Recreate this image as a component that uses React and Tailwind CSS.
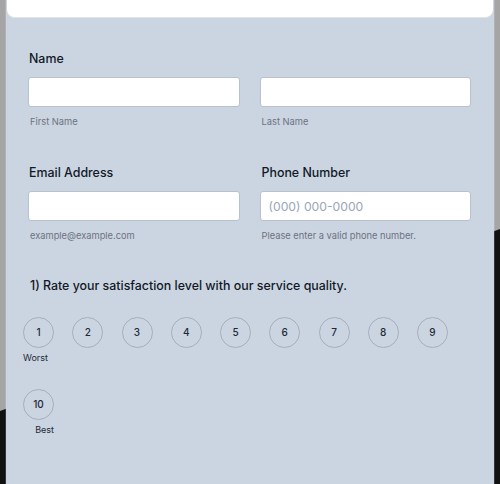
import React from 'react';

const scale = [1, 2, 3, 4, 5, 6, 7, 8, 9, 10];

function Field({ sub, placeholder }) {
  return (
    <div>
      <div className="h-[30px]">
        <input
          type="text"
          placeholder={placeholder}
          className="w-full h-[30px] bg-white border border-[#b9c1cd] rounded-[3px] px-2 text-[12.2px] text-gray-800 placeholder:text-[#9aa6b8] outline-none"
        />
      </div>
      <p className="mt-[9px] ml-[2px] text-[9.3px] leading-3 text-[#6b7280]">{sub}</p>
    </div>
  );
}

export default function App() {
  return (
    <div className="relative h-[484px] overflow-hidden bg-[#a5a5a5] px-[6px] font-['Inter','Liberation_Sans',sans-serif]">
      {/* dark backdrop shape behind the form */}
      <div className="absolute inset-0 bg-[#111111] [clip-path:polygon(0_411px,100%_229px,100%_100%,0_100%)]" />

      <div className="relative h-full bg-[#cbd5e1] shadow-[0_0_0_1px_rgba(255,255,255,0.15)]">
        <div className="mx-px h-[18px] bg-white rounded-b-lg border-b border-[#dfe4ea]" />

        <div className="pl-[22px] pr-[23px]">
          {/* Name */}
          <h3 className="mt-[33px] ml-px text-[12.4px] leading-4 font-medium text-[#111827]">Name</h3>
          <div className="mt-[10px] grid grid-cols-2 gap-x-5">
            <Field sub="First Name" />
            <Field sub="Last Name" />
          </div>

          {/* Email + phone */}
          <div className="mt-[37px] grid grid-cols-2 gap-x-5">
            <h3 className="ml-px text-[12.4px] leading-4 font-medium text-[#111827]">Email Address</h3>
            <h3 className="ml-[2px] text-[12.4px] leading-4 font-medium text-[#111827]">Phone Number</h3>
          </div>
          <div className="mt-[10px] grid grid-cols-2 gap-x-5">
            <Field sub="example@example.com" />
            <Field sub="Please enter a valid phone number." placeholder="(000) 000-0000" />
          </div>

          {/* Rating */}
          <h3 className="mt-9 ml-[2px] text-[12.4px] leading-4 font-medium text-[#111827]">
            1) Rate your satisfaction level with our service quality.
          </h3>
          <div className="mt-[23px] -ml-[5px] flex flex-wrap gap-x-[18.25px] gap-y-[25px] w-[430px]">
            {scale.map((n) => (
              <div key={n} className="w-[31px] flex flex-col">
                <button className="w-[31px] h-[31px] rounded-full border border-[#a6aeba] flex items-center justify-center text-[10px] font-medium text-[#1f2937]">
                  {n}
                </button>
                <span
                  className={
                    n === 1
                      ? 'mt-1 h-3 text-[9px] leading-3 text-[#1f2937] whitespace-nowrap'
                      : n === 10
                      ? 'mt-1 h-3 text-[9px] leading-3 text-[#1f2937] text-right whitespace-nowrap'
                      : 'mt-1 h-3'
                  }
                >
                  {n === 1 ? 'Worst' : n === 10 ? 'Best' : ''}
                </span>
              </div>
            ))}
          </div>
        </div>
      </div>
    </div>
  );
}
